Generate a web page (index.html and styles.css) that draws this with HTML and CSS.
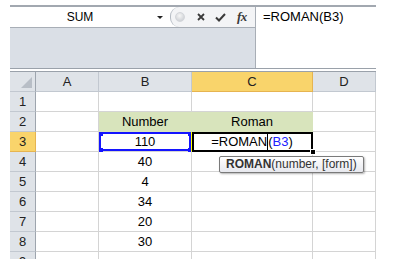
FILE: index.html
```
<!DOCTYPE html>
<html>
<head>
<meta charset="utf-8">
<link rel="stylesheet" href="styles.css">
</head>
<body>
<div class="app">
  <div class="fbar">
    <div class="fbar-left">
      <div class="fbar-top">
        <div class="namebox"><span class="name">SUM</span><span class="dd"><span class="caret"></span></span></div>
        <div class="tools">
          <span class="knob"></span>
          <svg class="ico-x" width="8" height="8" viewBox="0 0 8 8"><path d="M1 1L7 7M7 1L1 7" stroke="#3a3a3a" stroke-width="1.8" fill="none"/></svg>
          <svg class="ico-ok" width="11" height="9" viewBox="0 0 11 9"><path d="M1 4.5L4 7.5L10 1" stroke="#3a3a3a" stroke-width="2" fill="none"/></svg>
          <span class="fx">fx</span>
        </div>
      </div>
      <div class="fbar-fill"></div>
    </div>
    <div class="formula">=ROMAN(B3)</div>
  </div>
  <div class="sep"></div>
  <div class="grid">
    <div class="c h corner"><svg width="11" height="11" viewBox="0 0 11 11"><polygon points="11,0 11,11 0,11" fill="#b8bec6"/></svg></div>
    <div class="c h">A</div>
    <div class="c h">B</div>
    <div class="c h sel">C</div>
    <div class="c h">D</div>

    <div class="c h rh">1</div><div class="c"></div><div class="c"></div><div class="c"></div><div class="c"></div>

    <div class="c h rh">2</div><div class="c"></div><div class="c green">Number</div><div class="c green">Roman</div><div class="c"></div>

    <div class="c h rh sel">3</div><div class="c"></div>
    <div class="c b3">110<i class="sq tl"></i><i class="sq tr"></i><i class="sq bl"></i><i class="sq br"></i></div>
    <div class="c c3"><span>=ROMAN</span><span class="cur"></span><span>(<span class="ref">B3</span>)</span></div>
    <div class="c"></div>

    <div class="c h rh">4</div><div class="c"></div><div class="c">40</div><div class="c"></div><div class="c"></div>
    <div class="c h rh">5</div><div class="c"></div><div class="c">4</div><div class="c"></div><div class="c"></div>
    <div class="c h rh">6</div><div class="c"></div><div class="c">34</div><div class="c"></div><div class="c"></div>
    <div class="c h rh">7</div><div class="c"></div><div class="c">20</div><div class="c"></div><div class="c"></div>
    <div class="c h rh">8</div><div class="c"></div><div class="c">30</div><div class="c"></div><div class="c"></div>
    <div class="c h rh">9</div><div class="c"></div><div class="c"></div><div class="c"></div><div class="c"></div>

    <div class="tip"><b>ROMAN</b>(number, [form])</div>
  </div>
</div>
</body>
</html>
```
FILE: styles.css
```
body {
  margin: 0;
  background: #fff;
  font-family: "Liberation Sans", Arial, sans-serif;
}
.app {
  width: 366px;
  margin: 5px 0 0 10px;
}
.fbar {
  display: flex;
  height: 64px;
  box-sizing: border-box;
  border-top: 2px solid #a2a8b0;
  border-bottom: 1px solid #9aa1aa;
}
.fbar-left {
  width: 245px;
  display: flex;
  flex-direction: column;
}
.fbar-top {
  height: 21px;
  box-sizing: border-box;
  display: flex;
  border-bottom: 1px solid #a8aeb6;
  background: #fff;
}
.namebox {
  width: 160px;
  display: flex;
  align-items: center;
}
.name {
  width: 140px;
  text-align: center;
  font-size: 12px;
  color: #000;
}
.dd {
  width: 20px;
  display: flex;
  justify-content: center;
}
.caret {
  width: 0;
  height: 0;
  border-left: 3px solid transparent;
  border-right: 3px solid transparent;
  border-top: 3px solid #222;
  margin-top: 1px;
}
.tools {
  flex: 1;
  display: flex;
  align-items: center;
  background: #f3f4f6;
  border-left: 1px solid #b5bbc3;
  border-radius: 9px 0 0 9px;
}
.knob {
  width: 10px;
  height: 10px;
  border-radius: 50%;
  margin-left: 4px;
  background: radial-gradient(circle at 45% 35%, #f6f6f6, #c3c7cd);
  border: 1px solid #d3d6da;
  box-sizing: border-box;
}
.ico-x {
  margin-left: 12px;
}
.ico-ok {
  margin-left: 10px;
}
.fx {
  margin-left: 11px;
  font-family: "Liberation Serif", "Times New Roman", serif;
  font-style: italic;
  font-weight: bold;
  font-size: 13px;
  color: #3a3a3a;
  letter-spacing: -0.5px;
}
.fbar-fill {
  flex: 1;
  background: #dadfe6;
}
.formula {
  flex: 1;
  background: #fff;
  border-left: 1px solid #a8aeb6;
  font-size: 13px;
  line-height: 20px;
  padding-left: 7px;
  color: #000;
}
.sep {
  height: 3px;
  box-sizing: border-box;
  border-bottom: 1px solid #9aa1aa;
  background: #fff;
}
.grid {
  display: grid;
  grid-template-columns: 26px 63px 93px 121px 63px;
  grid-auto-rows: 20px;
  height: 187px;
  overflow: hidden;
  position: relative;
  font-size: 13px;
  color: #000;
}
.c {
  box-sizing: border-box;
  border-right: 1px solid #d4d4d4;
  border-bottom: 1px solid #d4d4d4;
  display: flex;
  align-items: center;
  justify-content: center;
  white-space: nowrap;
}
.h {
  background: #dfe3e8;
  border-color: #c2c8d0;
  color: #222;
}
.rh {
  border-right-color: #9ea5ae;
}
.h.sel {
  background: #f9d46b;
  border-color: #e6b450;
}
.corner {
  justify-content: flex-end;
  align-items: flex-end;
  padding: 0 3px 3px 0;
  border-right-color: #9ea5ae;
}
.corner svg {
  display: block;
}
.green {
  background: #d8e4bc;
  border-color: #d8e4bc;
}
.b3 {
  position: relative;
  box-shadow: inset 0 0 0 2px #1414ff;
  border-right-color: #ffff00;
}
.sq {
  position: absolute;
  width: 4px;
  height: 4px;
  background: #1414ff;
}
.sq.tl { left: 0; top: 0; }
.sq.tr { right: 0; top: 0; width: 3px; }
.sq.bl { left: 0; bottom: -1px; }
.sq.br { right: 0; bottom: -1px; width: 3px; }
.c3 {
  position: relative;
  border-right-color: #000;
  border-bottom-color: #000;
  box-shadow: inset 2px 2px 0 #000, inset -1px -1px 0 #000;
  align-items: stretch;
}
.c3 > span {
  display: flex;
  align-items: center;
}
.c3 .cur {
  width: 1px;
  background: #000;
}
.c3::after {
  content: "";
  position: absolute;
  right: -4px;
  bottom: -4px;
  width: 5px;
  height: 5px;
  background: #000;
  border: 1px solid #fff;
  box-sizing: content-box;
  width: 4px;
  height: 4px;
}
.ref {
  color: #2020ff;
}
.tip {
  position: absolute;
  left: 209px;
  top: 84px;
  height: 17px;
  box-sizing: border-box;
  padding: 0 6px;
  border: 1px solid #7a7a7a;
  border-radius: 2px;
  background: linear-gradient(#ffffff, #e7e8ee);
  box-shadow: 1px 1px 2px rgba(0, 0, 0, 0.3);
  font-size: 12px;
  line-height: 15px;
  color: #333;
  white-space: nowrap;
}
.tip b {
  font-weight: bold;
}
```
